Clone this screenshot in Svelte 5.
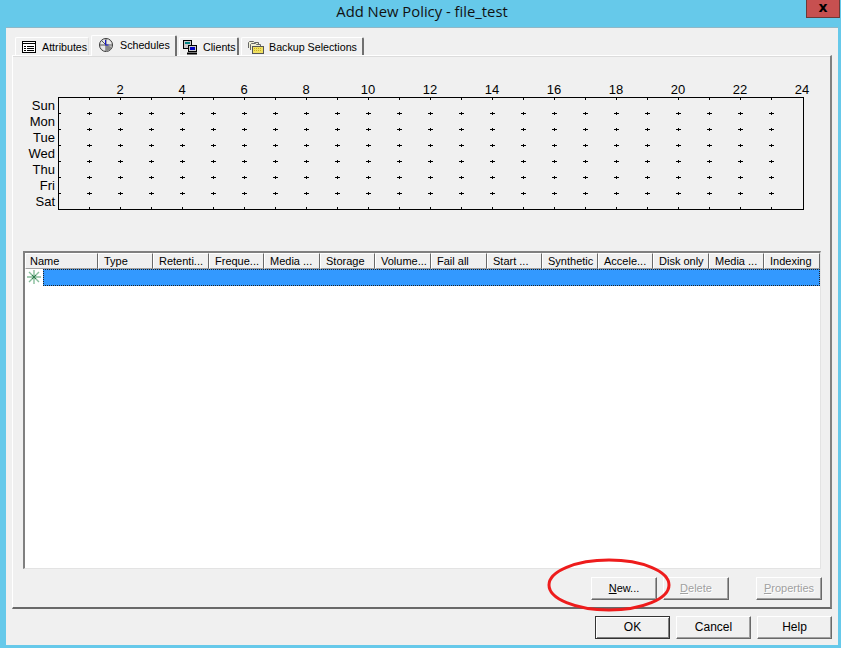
<script>
  const days = ['Sun', 'Mon', 'Tue', 'Wed', 'Thu', 'Fri', 'Sat'];
  const hours = [2, 4, 6, 8, 10, 12, 14, 16, 18, 20, 22, 24];
  const columns = [
    ['Name', 73], ['Type', 55], ['Retenti...', 56], ['Freque...', 55], ['Media ...', 56],
    ['Storage', 55], ['Volume...', 56], ['Fail all', 56], ['Start ...', 55], ['Synthetic', 56],
    ['Accele...', 55], ['Disk only', 56], ['Media ...', 55], ['Indexing', 56]
  ];

  // grid marks for the schedule chart, 31px per hour and 16px per row
  const columnX = Array.from({ length: 24 }, (_, i) => i * 31);
  const rowY = [16, 32, 48, 64, 80, 96];
</script>

<div class="window">
  <div class="titlebar">
    <span class="title">Add New Policy - file_test</span>
    <button class="close">x</button>
  </div>

  <div class="client">
    <div class="tabs">
      <div class="tab first">
        <svg width="16" height="14" viewBox="0 0 16 14">
          <rect x="1.5" y="1.5" width="13" height="11" fill="#fff" stroke="#000" />
          <path d="M1 3.5h14M3 6.5h2M6 6.5h7M3 8.5h2M6 8.5h7M3 10.5h2M6 10.5h7" stroke="#000" />
        </svg>
        <span>Attributes</span>
      </div>
      <div class="tab active">
        <svg width="16" height="16" viewBox="0 0 16 16">
          <circle cx="8" cy="8" r="6.5" fill="#e8e8e8" stroke="#333" />
          <path d="M8 1.5v13M1.5 8h13M3.5 3.5l9 9" stroke="#555" />
          <path d="M8 8l6 2-2 3-4 2z" fill="#8a8a8a" />
          <path d="M7.5 3v5h3" stroke="#1a1ad0" fill="none" />
        </svg>
        <span>Schedules</span>
      </div>
      <div class="tab">
        <svg width="16" height="16" viewBox="0 0 16 16">
          <rect x="1.5" y="1.5" width="8" height="8" fill="#c8c8c8" stroke="#000" />
          <rect x="3" y="3" width="5" height="2" fill="#008080" />
          <rect x="6.5" y="6.5" width="8" height="6" fill="#c8c8c8" stroke="#000" />
          <rect x="8" y="8" width="5" height="3" fill="#0000c0" />
          <path d="M5 14.5h10" stroke="#000" stroke-width="2" />
        </svg>
        <span>Clients</span>
      </div>
      <div class="tab">
        <svg width="18" height="16" viewBox="0 0 18 16">
          <path d="M1.5 9V3.5l1-1h4l1 1h4v3" fill="#efefd8" stroke="#666" />
          <path d="M3.5 11V5.5l1-1h4l1 1h4v3" fill="#efefd8" stroke="#666" />
          <rect x="5.5" y="7.5" width="11" height="7" fill="#f0e060" stroke="#555" />
          <path d="M7 9.5h8M7 11.5h8" stroke="#c8b020" stroke-dasharray="1 1" />
        </svg>
        <span>Backup Selections</span>
      </div>
    </div>

    <div class="page">
      <div class="hours">
        {#each hours as hour}
          <span>{hour}</span>
        {/each}
      </div>

      <div class="schedule">
        <div class="days">
          {#each days as day}
            <span>{day}</span>
          {/each}
        </div>
        <svg class="chart" width="746" height="113" viewBox="0 0 746 113">
          <rect x="0.5" y="0.5" width="745" height="112" fill="none" stroke="#000" />
          {#each columnX as x}
            <path d="M{x + 0.5} 1v2M{x + 0.5} 110v2" stroke="#000" />
            {#each rowY as y}
              <path d="M{x - 2} {y + 0.5}h5M{x + 0.5} {y - 1}v3" stroke="#000" />
            {/each}
          {/each}
        </svg>
      </div>

      <div class="list">
        <div class="header">
          {#each columns as [label, width]}
            <div class="cell" style="width: {width}px">{label}</div>
          {/each}
        </div>
        <div class="row">
          <svg class="row-icon" width="16" height="16" viewBox="0 0 16 16">
            <path d="M8 1v14M1 8h14M3 3l10 10M13 3L3 13" stroke="#86bd9a" stroke-width="1.4" />
            <path d="M6 6l4 4M10 6l-4 4" stroke="#2f7a4d" />
          </svg>
          <div class="row-selected"></div>
        </div>
      </div>

      <div class="list-actions">
        <button class="btn small"><u>N</u>ew...</button>
        <button class="btn small" disabled><u>D</u>elete</button>
        <button class="btn small props" disabled><u>P</u>roperties</button>
      </div>
    </div>

    <div class="footer">
      <button class="btn wide default">OK</button>
      <button class="btn wide">Cancel</button>
      <button class="btn wide">Help</button>
    </div>

    <svg class="circle" width="130" height="58" viewBox="0 0 130 58">
      <ellipse cx="65" cy="29" rx="60" ry="25" fill="none" stroke="#ee1c1c" stroke-width="3" />
    </svg>
  </div>
</div>

<style>
:global(body) {
  margin: 0;
  background: #66c9ea;
}

.window {
  width: 841px;
  height: 648px;
  background: #66c9ea;
  font-family: "Liberation Sans", Arial, sans-serif;
  font-size: 11px;
  color: #000;
  display: flex;
  flex-direction: column;
  overflow: hidden;
}

.titlebar {
  height: 27px;
  flex: none;
  box-sizing: border-box;
  position: relative;
  display: flex;
  justify-content: center;
  align-items: center;
  padding: 0 0 5px 3px;
}

.title {
  font-family: "Open Sans", "Noto Sans", sans-serif;
  font-size: 14.8px;
  color: #111;
}

.close {
  position: absolute;
  right: 1px;
  top: 0;
  width: 34px;
  height: 18px;
  padding: 0 0 3px;
  background: #c75050;
  border: 1px solid #6b3a38;
  border-top: none;
  font-family: "DejaVu Sans", sans-serif;
  font-size: 14px;
  font-weight: 700;
  line-height: 14px;
  color: #000;
}

.client {
  position: relative;
  width: 832px;
  height: 618px;
  margin-left: 6px;
  background: #f0f0f0;
  box-sizing: border-box;
  padding: 7px 6px 0;
  border-top: 1px solid #8fb8c8;
}

.tabs {
  display: flex;
  align-items: flex-end;
  height: 20px;
  padding-left: 3px;
  position: relative;
  z-index: 1;
  font-size: 10.7px;
}

.tab {
  height: 18px;
  flex: none;
  display: flex;
  align-items: center;
  margin-right: 2px;
  box-sizing: border-box;
  background: #f0f0f0;
  border-top: 1px solid #fff;
  border-left: 1px solid #fff;
  border-right: 2px solid #707070;
  border-radius: 2px 2px 0 0;
  white-space: nowrap;
}

.tab svg {
  flex: none;
}

.tab.first {
  width: 74px;
  padding-left: 5px;
  gap: 5px;
  border-right: 1px solid #e0e0e0;
}

.tab:nth-child(2) {
  width: 86px;
  padding-left: 6px;
  gap: 6px;
}

.tab:nth-child(3) {
  width: 60px;
  padding-left: 2px;
  gap: 5px;
}

.tab:nth-child(4) {
  width: 123px;
  padding-left: 5px;
  gap: 4px;
}

.tab.active {
  height: 21px;
  margin-bottom: -1px;
  padding-bottom: 3px;
}

.page {
  width: 820px;
  height: 554px;
  box-sizing: border-box;
  border-top: 1px solid #fff;
  border-left: 1px solid #fff;
  border-right: 2px solid #808080;
  border-bottom: 2px solid #696969;
  box-shadow: inset 0 1px 0 #dcdcdc;
  padding: 26px 0 0 10px;
}

.hours {
  display: grid;
  grid-template-columns: repeat(12, 62px);
  height: 15px;
  margin-left: 66px;
  font-size: 13px;
  line-height: 15px;
}

.hours span {
  text-align: center;
}

.schedule {
  display: flex;
}

.days {
  width: 33px;
  display: flex;
  flex-direction: column;
  padding-top: 1px;
  text-align: right;
  font-size: 13px;
  line-height: 16px;
}

.days span {
  height: 16px;
  padding-right: 1px;
}

.chart {
  display: block;
  margin-left: 2px;
}

.list {
  width: 798px;
  height: 318px;
  box-sizing: border-box;
  margin-top: 41px;
  background: #fff;
  border-top: 2px solid #808080;
  border-left: 2px solid #808080;
  border-right: 1px solid #e3e3e3;
  border-bottom: 1px solid #e3e3e3;
}

.header {
  display: flex;
  height: 16px;
}

.cell {
  height: 16px;
  flex: none;
  box-sizing: border-box;
  padding: 1px 0 0 5px;
  background: #f0f0f0;
  border-top: 1px solid #fff;
  border-left: 1px solid #fff;
  border-right: 1px solid #696969;
  border-bottom: 1px solid #a0a0a0;
  line-height: 13px;
  white-space: nowrap;
  overflow: hidden;
}

.cell:first-child {
  padding-left: 4px;
}

.row {
  display: flex;
  height: 17px;
}

.row-icon {
  flex: none;
  width: 18px;
  height: 16px;
}

.row-selected {
  width: 777px;
  height: 17px;
  box-sizing: border-box;
  background: #3399ff;
  border: 1px dotted #222;
}

.list-actions {
  display: flex;
  margin-top: 8px;
  padding-left: 568px;
  gap: 6px;
}

.btn {
  height: 23px;
  padding: 0 0 2px;
  background: #f0f0f0;
  border: 1px solid;
  border-color: #fff #696969 #696969 #fff;
  box-shadow: inset -1px -1px 0 #a0a0a0;
  font-family: inherit;
  font-size: 11px;
  color: #000;
}

.btn.small {
  width: 66px;
}

.btn.props {
  margin-left: 21px;
}

.btn:disabled {
  color: #a0a0a0;
  text-shadow: 1px 1px 0 #fff;
}

.footer {
  display: flex;
  gap: 6px;
  margin-top: 7px;
  padding-left: 583px;
}

.btn.wide {
  width: 75px;
  font-size: 12px;
}

.btn.default {
  border-color: #333;
  box-shadow: inset 1px 1px 0 #fff, inset -1px -1px 0 #808080;
}

.circle {
  position: absolute;
  left: 538px;
  top: 528px;
}
</style>
